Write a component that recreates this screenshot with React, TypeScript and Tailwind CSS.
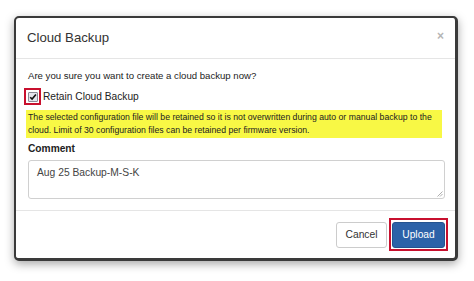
import React from "react";

export default function App() {
  return (
    <div className="w-[474px] h-[281px] bg-white pt-[16px] pl-[14px] overflow-hidden" style={{ fontFamily: '"Liberation Sans", Arial, sans-serif' }}>
      <div className="w-[444px] h-[245px] bg-white border-[#3a3a3a] border-t-[2px] border-l-[2px] border-r-[3px] border-b-[3px] rounded-[5px] shadow-[0_3px_10px_rgba(0,0,0,0.35)] flex flex-col text-[#333]">
        {/* Header */}
        <div className="h-[41px] shrink-0 border-b border-[#e5e5e5] flex items-center justify-between pl-[11px] pr-[11px]">
          <span className="text-[13.2px] text-[#333]">Cloud Backup</span>
          <span className="text-[12px] font-bold text-[#b5b5b5] leading-none -mt-[5px]">×</span>
        </div>
        {/* Body */}
        <div className="h-[152px] shrink-0 border-b border-[#e5e5e5] pl-[10px] pr-[10px] pt-[10px] flex flex-col">
          <div className="ml-[2px] h-[14px] leading-[14px] text-[9.6px] text-[#222]">Are you sure you want to create a cloud backup now?</div>
          <div className="mt-[5px] h-[17px] flex items-center ml-[-2px]">
            <div className="w-[17px] h-[17px] border-2 border-[#c8102e] flex items-center justify-center">
              <div className="w-[10px] h-[10px] border border-[#8a8a96] bg-[#e4e3ec] rounded-[1px] flex items-center justify-center">
                <svg width="8" height="8" viewBox="0 0 8 8">
                  <path d="M1.2 4.2 L3.1 6.1 L6.9 1.6" fill="none" stroke="#111" strokeWidth="1.6" />
                </svg>
              </div>
            </div>
            <span className="ml-[2px] text-[10.2px] text-[#222] leading-[14px]">Retain Cloud Backup</span>
          </div>
          <div className="mt-[5px] w-[416px] h-[28px] bg-[#f8f845] pl-[2px] pt-[1px] text-[8.7px] leading-[13px] text-[#222]">
            The selected configuration file will be retained so it is not overwritten during auto or manual backup to the cloud. Limit of 30 configuration files can be retained per firmware version.
          </div>
          <div className="mt-[4px] ml-[2px] h-[14px] leading-[14px] text-[10.2px] font-bold text-[#222]">Comment</div>
          <div className="relative mt-[4px] ml-[2px] w-[417px] h-[39px] border border-[#d0d0d0] rounded-[3px] pl-[8px] pt-[5px] text-[10.3px] leading-[14px] text-[#444]">
            Aug 25 Backup-M-S-K
            <svg className="absolute right-[1px] bottom-[1px]" width="6" height="6" viewBox="0 0 6 6">
              <path d="M5.5 0.5 L0.5 5.5 M5.5 3 L3 5.5" stroke="#999" strokeWidth="0.8" />
            </svg>
          </div>
        </div>
        {/* Footer */}
        <div className="flex-1 flex items-center justify-end pr-[7px] gap-[2px]">
          <button className="w-[51px] h-[26px] bg-white border border-[#cccccc] rounded-[3px] text-[10.3px] text-[#333]">Cancel</button>
          <div className="border-2 border-[#c8102e] p-[1px]">
            <button className="w-[53px] h-[26px] bg-[#2c62a8] border border-[#24538f] rounded-[3px] text-[10.2px] text-white">Upload</button>
          </div>
        </div>
      </div>
    </div>
  );
}
